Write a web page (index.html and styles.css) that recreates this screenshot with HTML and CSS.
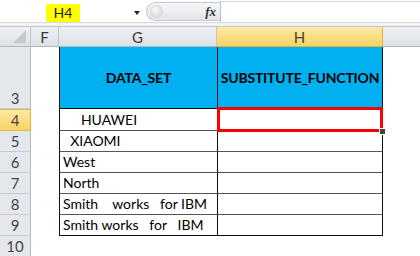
FILE: index.html
```html
<!DOCTYPE html>
<html lang="en">
<head>
    <meta charset="UTF-8">
    <title>SUBSTITUTE function</title>
    <link rel="stylesheet" href="styles.css">
</head>
<body>
<div class="formula-bar">
    <div class="name-box">
        <span class="cell-ref">H4</span>
        <span class="drop-arrow"></span>
    </div>
    <div class="fx-area">
        <span class="knob"></span>
        <span class="fx">fx</span>
    </div>
    <div class="formula-input"></div>
</div>
<div class="bar-sep"></div>
<div class="sheet">
    <!-- cabecera de columnas -->
    <div class="corner"><span class="corner-tri"></span></div>
    <div class="col-head">F</div>
    <div class="col-head">G</div>
    <div class="col-head active">H</div>
    <div class="col-head rest"></div>

    <div class="row-head">3</div>
    <div class="cell"></div>
    <div class="cell g title">DATA_SET</div>
    <div class="cell h title">SUBSTITUTE_FUNCTION</div>
    <div class="cell"></div>

    <div class="row-head active">4</div>
    <div class="cell"></div>
    <div class="cell g">     HUAWEI</div>
    <div class="cell h selected"><span class="handle"></span></div>
    <div class="cell"></div>

    <div class="row-head">5</div>
    <div class="cell"></div>
    <div class="cell g">  XIAOMI</div>
    <div class="cell h"></div>
    <div class="cell"></div>

    <div class="row-head">6</div>
    <div class="cell"></div>
    <div class="cell g">West</div>
    <div class="cell h"></div>
    <div class="cell"></div>

    <div class="row-head">7</div>
    <div class="cell"></div>
    <div class="cell g">North</div>
    <div class="cell h"></div>
    <div class="cell"></div>

    <div class="row-head">8</div>
    <div class="cell"></div>
    <div class="cell g">Smith    works   for IBM</div>
    <div class="cell h"></div>
    <div class="cell"></div>

    <div class="row-head">9</div>
    <div class="cell"></div>
    <div class="cell g last">Smith works   for   IBM</div>
    <div class="cell h last"></div>
    <div class="cell"></div>

    <div class="row-head">10</div>
    <div class="cell"></div>
    <div class="cell"></div>
    <div class="cell"></div>
    <div class="cell"></div>
</div>
</body>
</html>
```
FILE: styles.css
```css
body {
    margin: 0;
    width: 420px;
    height: 256px;
    overflow: hidden;
    background: #fff;
    font-family: Lato, "Liberation Sans", sans-serif;
    font-size: 14px;
    color: #000;
}
.formula-bar {
    display: flex;
    height: 22px;
    background: #fff;
}
.name-box {
    position: relative;
    width: 146px;
    height: 22px;
}
.cell-ref {
    position: absolute;
    left: 46px;
    top: 4px;
    width: 34px;
    height: 18px;
    background: #ffff00;
    text-align: center;
    line-height: 18px;
    font-size: 14px;
    color: #222;
}
.drop-arrow {
    position: absolute;
    left: 134px;
    top: 11px;
    border-left: 3px solid transparent;
    border-right: 3px solid transparent;
    border-top: 4px solid #222;
}
.fx-area {
    position: relative;
    width: 74px;
    height: 19px;
    margin-top: 2px;
    box-sizing: border-box;
    border: 1px solid #c6cad0;
    border-right: none;
    border-radius: 10px 0 0 10px;
    background: linear-gradient(#f5f6f8, #e2e5e9);
}
.knob {
    position: absolute;
    left: 4px;
    top: 3px;
    width: 11px;
    height: 11px;
    border-radius: 50%;
    background: radial-gradient(circle at 40% 35%, #fafafa, #c9ccd1);
    box-shadow: 0 0 0 1px #d4d7dc;
}
.fx {
    position: absolute;
    right: 4px;
    top: 0;
    font-family: "Liberation Serif", serif;
    font-style: italic;
    font-weight: bold;
    font-size: 13px;
    line-height: 17px;
    color: #333;
}
.formula-input {
    flex: 1;
    height: 20px;
    margin-top: 1px;
    border-left: 1px solid #b9bec5;
    border-top: 1px solid #d2d5da;
    background: #fff;
}
.bar-sep {
    height: 3px;
    border-top: 1px solid #d8dbe0;
    border-bottom: 1px solid #c3c7cd;
    background: #f2f3f5;
}
.sheet {
    display: grid;
    grid-template-columns: 31px 28px 158px 166px 1fr;
    grid-template-rows: 20px 62px 22px 21px 21px 21px 21px 21px 21px;
}
.corner,
.col-head {
    box-sizing: border-box;
    background: linear-gradient(#eef0f3, #dde1e6);
    border-right: 1px solid #c2c6cc;
    border-bottom: 1px solid #b3b8bf;
    color: #3a3a3a;
    font-size: 15px;
    display: flex;
    align-items: center;
    justify-content: center;
}
.corner {
    position: relative;
}
.corner-tri {
    position: absolute;
    right: 4px;
    bottom: 3px;
    border-left: 13px solid transparent;
    border-bottom: 13px solid #c5c9cf;
}
.col-head.active {
    background: linear-gradient(#fde9a4, #f9d462);
    border-bottom: 1px solid #e3b24a;
    border-right: 1px solid #e3b24a;
    color: #444;
}
.col-head.rest {
    border-right: none;
}
.row-head {
    box-sizing: border-box;
    background: #e4e7ec;
    border-right: 1px solid #b3b8bf;
    border-bottom: 1px solid #c8ccd2;
    color: #444;
    font-size: 15px;
    display: flex;
    align-items: flex-end;
    justify-content: center;
    padding-bottom: 1px;
}
.row-head.active {
    background: linear-gradient(#fde9a4, #f9d462);
    border: 1px solid #e3b24a;
    border-left: none;
}
.cell {
    box-sizing: border-box;
    white-space: pre;
    display: flex;
    align-items: flex-end;
    padding-bottom: 2px;
}
.cell.g {
    border-left: 1px solid #111;
    border-bottom: 1px solid #555;
    padding-left: 3px;
}
.cell.h {
    border-left: 1px solid #111;
    border-right: 1px solid #111;
    border-bottom: 1px solid #555;
}
.cell.last {
    border-bottom: 1px solid #111;
}
.cell.title {
    background: #00b0f0;
    font-weight: bold;
    letter-spacing: -0.2px;
    align-items: center;
    justify-content: center;
    padding: 0;
    border-bottom-color: #111;
}
.cell.selected {
    position: relative;
}
.cell.selected::after {
    content: "";
    position: absolute;
    left: -1px;
    top: -2px;
    right: -1px;
    bottom: -2px;
    border: 3px solid #ff0000;
}
.handle {
    position: absolute;
    right: -4px;
    bottom: -5px;
    width: 5px;
    height: 5px;
    background: #444;
    border: 1px solid #fff;
    z-index: 1;
}
```
